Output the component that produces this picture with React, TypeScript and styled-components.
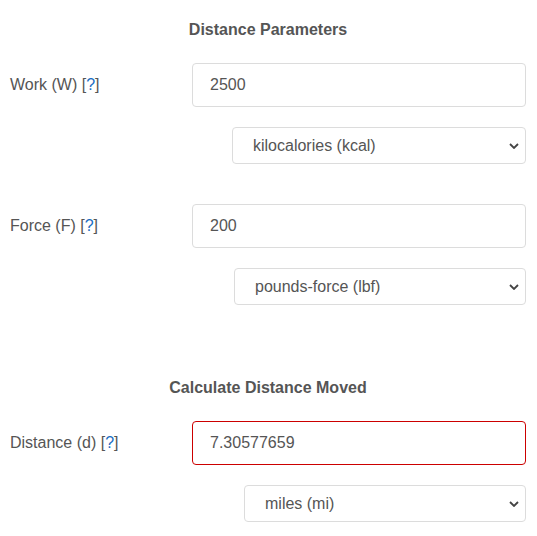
import React from 'react';
import styled, { createGlobalStyle } from 'styled-components';

const GlobalStyle = createGlobalStyle`
html, body {
margin: 0;
padding: 0;
background: #fff;
}
body {
font-family: 'Liberation Sans', Arial, sans-serif;
font-size: 16px;
color: #555;
}
`

const Page = styled.div`
display: flex;
flex-direction: column;
padding: 20px 11px 0 10px;
`

const Heading = styled.h3<{ $top: number }>`
margin: ${p => p.$top}px 0 23px 0;
font-size: 16px;
line-height: 20px;
font-weight: 700;
color: #555;
text-align: center;
`

const FieldGroup = styled.div<{ $top: number }>`
display: flex;
flex-direction: column;
gap: 20px;
margin-top: ${p => p.$top}px;
`

const Row = styled.div`
display: grid;
grid-template-columns: 182px 1fr;
align-items: center;
`

const Label = styled.label`
font-size: 16px;
color: #555;
`

const Help = styled.a`
color: #1a6dc2;
text-decoration: none;
`

const Input = styled.input<{ $error?: boolean }>`
box-sizing: border-box;
height: 44px;
width: 100%;
padding: 0 17px;
font-family: 'Liberation Sans', Arial, sans-serif;
font-size: 16px;
color: #555;
background: #fff;
border: 1px solid ${p => (p.$error ? '#cc0000' : '#dcdcdc')};
border-radius: 4px;
outline: none;
`

const UnitRow = styled.div`
display: flex;
justify-content: flex-end;
`

const Select = styled.select<{ $width: number }>`
box-sizing: border-box;
width: ${p => p.$width}px;
height: 37px;
padding: 0 20px;
font-family: 'Liberation Sans', Arial, sans-serif;
font-size: 16px;
color: #555;
background-color: #fff;
background-image: url("data:image/svg+xml;utf8,<svg xmlns='http://www.w3.org/2000/svg' width='10' height='6' viewBox='0 0 10 6'><path d='M1 1l4 4 4-4' fill='none' stroke='%23444' stroke-width='1.8'/></svg>");
background-repeat: no-repeat;
background-position: right 6px center;
border: 1px solid #dcdcdc;
border-radius: 4px;
appearance: none;
-webkit-appearance: none;
outline: none;
`

function Field({ label, value, unit, width, error }: { label: string; value: string; unit: string; width: number; error?: boolean }) {
    return (
        <>
            <Row>
                <Label>
                    {label} [<Help href="#">?</Help>]
                </Label>
                <Input defaultValue={value} $error={error} />
            </Row>
            <UnitRow>
                <Select $width={width} defaultValue={unit}>
                    <option>{unit}</option>
                </Select>
            </UnitRow>
        </>
    )
}

export default function App() {
    return (
        <Page>
            <GlobalStyle />
            <Heading $top={0}>Distance Parameters</Heading>
            <FieldGroup $top={0}>
                <Field label="Work (W)" value="2500" unit="kilocalories (kcal)" width={294} />
            </FieldGroup>
            <FieldGroup $top={40}>
                <Field label="Force (F)" value="200" unit="pounds-force (lbf)" width={292} />
            </FieldGroup>
            <Heading $top={73}>Calculate Distance Moved</Heading>
            <FieldGroup $top={0}>
                <Field label="Distance (d)" value="7.30577659" unit="miles (mi)" width={282} error />
            </FieldGroup>
        </Page>
    );
}
